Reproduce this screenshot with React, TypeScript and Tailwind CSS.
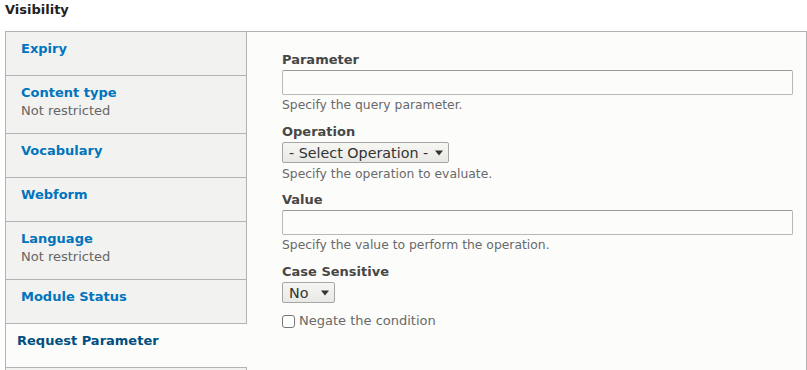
import React from "react";

type Tab = { title: string; summary?: string; active?: boolean; h: string };

const tabs: Tab[] = [
  { title: "Expiry", h: "h-[44.2px]" },
  { title: "Content type", summary: "Not restricted", h: "h-[57.5px]" },
  { title: "Vocabulary", h: "h-[44.2px]" },
  { title: "Webform", h: "h-[44.2px]" },
  { title: "Language", summary: "Not restricted", h: "h-[57.5px]" },
  { title: "Module Status", h: "h-[44.2px]" },
  { title: "Request Parameter", active: true, h: "h-[44.2px]" },
  { title: "", h: "h-[44.2px]" },
];

function Label({ children, className = "" }: { children: React.ReactNode; className?: string }) {
  return (
    <div className={`text-[13px] leading-[18px] font-bold text-[#474747] ${className}`}>{children}</div>
  );
}

function Description({ children, className = "mt-[1px]" }: { children: React.ReactNode; className?: string }) {
  return <div className={`text-[12.35px] leading-[18px] text-[#68696b] ${className}`}>{children}</div>;
}

function TextInput({ className = "" }: { className?: string }) {
  return (
    <div
      className={`h-[25px] w-full rounded-[2px] border border-[#b8b8b8] border-t-[#999] bg-[#fcfcfa] ${className}`}
    />
  );
}

function Select({ value, width, className = "" }: { value: string; width: string; className?: string }) {
  return (
    <div
      className={`flex h-[21px] items-center justify-between rounded-[2px] border border-[#a6a6a6] bg-gradient-to-b from-[#f6f6f3] to-[#e8e8e5] pl-[6px] pr-[5px] text-[14.3px] leading-[18px] text-[#333] ${width} ${className}`}
    >
      <span>{value}</span>
      <svg width="8" height="6" viewBox="0 0 8 6" className="shrink-0">
        <path d="M0 0.5 L8 0.5 L4 5.5 Z" fill="#333" />
      </svg>
    </div>
  );
}

export default function App() {
  return (
    <div className="h-[370px] w-full overflow-hidden bg-white font-['DejaVu_Sans',_sans-serif]">
      <h2 className="pl-[5px] pt-[1px] text-[13px] font-bold leading-[18px] text-[#222]">Visibility</h2>

      <div className="ml-[5px] mt-[12px] flex border-t border-l border-r border-[#b3b3b3]">
        {/* vertical tab menu */}
        <div className="w-[241px] shrink-0">
          {tabs.map((t, i) => (
            <div
              key={i}
              className={`box-border border-b border-[#b3b3b3] pt-[8px] ${t.h} ${
                t.active ? "bg-[#fcfcfa] pl-[11px]" : "border-r bg-[#f2f2f0] pl-[15px]"
              }`}
            >
              <div
                className={`text-[13px] font-bold leading-[18px] ${
                  t.active ? "text-[#004f80]" : "text-[#0074bd]"
                }`}
              >
                {t.title}
              </div>
              {t.summary && <div className="text-[13px] leading-[18px] text-[#666]">{t.summary}</div>}
            </div>
          ))}
        </div>

        {/* pane */}
        <div className="flex-1 bg-[#fcfcfa] pl-[35px] pr-[13px] pt-[19px]">
          <Label>Parameter</Label>
          <TextInput className="mt-px" />
          <Description>Specify the query parameter.</Description>

          <Label className="mt-[9px]">Operation</Label>
          <Select value="- Select Operation -" width="w-[167px]" className="mt-px" />
          <Description className="mt-[2px]">Specify the operation to evaluate.</Description>

          <Label className="mt-[8px]">Value</Label>
          <TextInput className="mt-px" />
          <Description>Specify the value to perform the operation.</Description>

          <Label className="mt-[9px]">Case Sensitive</Label>
          <Select value="No" width="w-[53px]" className="mt-px" />

          <label className="mt-[9px] flex h-[18px] items-center">
            <span className="h-[13px] w-[13px] rounded-[3px] border border-[#767676] bg-white" />
            <span className="ml-[4px] text-[13px] leading-[18px] text-[#68696b]">Negate the condition</span>
          </label>
        </div>
      </div>
    </div>
  );
}
